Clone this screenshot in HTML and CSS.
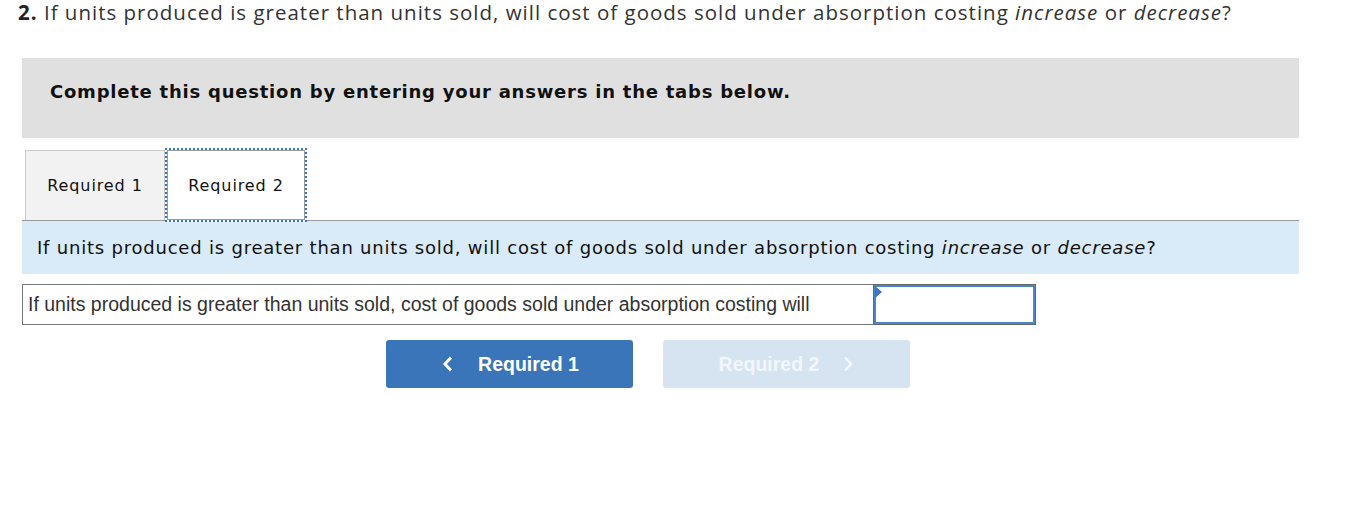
FILE: index.html
```html
<!DOCTYPE html>
<html>
<head>
<meta charset="utf-8">
<link rel="stylesheet" href="styles.css">
</head>
<body>
<div class="page">
  <p class="question"><b>2.</b> If units produced is greater than units sold, will cost of goods sold under absorption costing <i>increase</i> or <i>decrease</i>?</p>
  <div class="panel">
    <div class="instr">Complete this question by entering your answers in the tabs below.</div>
    <div class="tabs">
      <div class="tab">Required 1</div>
      <div class="tab active">Required 2</div>
    </div>
    <div class="prompt">If units produced is greater than units sold, will cost of goods sold under absorption costing <i>increase</i> or <i>decrease</i>?</div>
    <div class="answer-row">
      <div class="label-cell">If units produced is greater than units sold, cost of goods sold under absorption costing will</div>
      <div class="select-cell"><span class="flag"></span></div>
    </div>
    <div class="nav">
      <div class="btn prev"><svg class="chev left" width="12" height="16" viewBox="0 0 12 16"><polyline points="9,1.5 3,8 9,14.5" fill="none" stroke="currentColor" stroke-width="3"/></svg>Required 1</div>
      <div class="btn next disabled">Required 2<svg class="chev right" width="12" height="16" viewBox="0 0 12 16"><polyline points="3,1.5 9,8 3,14.5" fill="none" stroke="currentColor" stroke-width="2.5"/></svg></div>
    </div>
  </div>
</div>
</body>
</html>
```

FILE: styles.css
```css
html, body { margin: 0; padding: 0; background: #fff; }
.page { padding: 0 0 0 18px; }
.question {
  margin: 0;
  font-family: "Open Sans", Lato, sans-serif;
  font-size: 20.5px;
  line-height: 25px;
  letter-spacing: 1px;
  color: #333;
}
.question b { font-weight: 700; color: #222; }
.panel { width: 1277px; margin: 33px 0 0 4px; }
.instr {
  background: #e0e0e0;
  height: 80px;
  box-sizing: border-box;
  padding: 21px 0 0 28px;
  font-family: "DejaVu Sans", Verdana, sans-serif;
  font-weight: bold;
  font-size: 18px;
  letter-spacing: 0.77px;
  line-height: 26px;
  color: #111;
}
.tabs {
  display: flex;
  margin-top: 10px;
  padding-left: 3px;
  border-bottom: 1px solid #999;
  height: 72px;
  align-items: flex-end;
}
.tab {
  box-sizing: border-box;
  width: 140px;
  height: 70px;
  background: #f2f2f2;
  border: 1px solid #c8c8c8;
  border-bottom: none;
  display: flex;
  align-items: center;
  justify-content: center;
  font-family: "DejaVu Sans", Verdana, sans-serif;
  font-size: 16px;
  letter-spacing: 0.9px;
  color: #111;
}
.tab.active {
  background: #fff;
  width: 142px;
  height: 74px;
  margin-bottom: -2px;
  border: 2px dotted #3a75c0;
  outline: 1px solid #999;
  outline-offset: -3px;
}
.prompt {
  background: #d9eaf8;
  height: 53px;
  box-sizing: border-box;
  padding: 16px 0 0 15px;
  font-family: "DejaVu Sans", Verdana, sans-serif;
  font-size: 18px;
  letter-spacing: 0.79px;
  line-height: 22px;
  color: #111;
}
.answer-row { display: flex; margin-top: 10px; height: 41px; }
.label-cell {
  box-sizing: border-box;
  width: 851px;
  border: 1px solid #777;
  border-right: none;
  padding: 8px 0 0 5px;
  font-family: "Liberation Sans", Arial, sans-serif;
  font-size: 19.5px;
  line-height: 22px;
  color: #333;
}
.select-cell {
  position: relative;
  box-sizing: border-box;
  width: 163px;
  border: 1px solid #666;
  box-shadow: inset 0 0 0 2px #4a86c8;
}
.flag {
  position: absolute;
  left: 1px; top: 1px;
  width: 0; height: 0;
  border-top: 6px solid transparent;
  border-bottom: 6px solid transparent;
  border-left: 7px solid #3a75c0;
}
.nav { display: flex; gap: 30px; margin-top: 15px; padding-left: 364px; }
.btn {
  width: 247px; height: 48px;
  border-radius: 3px;
  display: flex; align-items: center; justify-content: center;
  font-family: "Liberation Sans", Arial, sans-serif;
  font-weight: bold;
  font-size: 19.5px;
  color: #fff;
}
.btn.prev { background: #3a75b9; }
.btn.disabled { background: #d6e3f1; color: #f2f7fc; }
.chev { display: block; }
.chev.left { margin-right: 24px; margin-left: 2px; }
.chev.right { margin-left: 23px; }
```
